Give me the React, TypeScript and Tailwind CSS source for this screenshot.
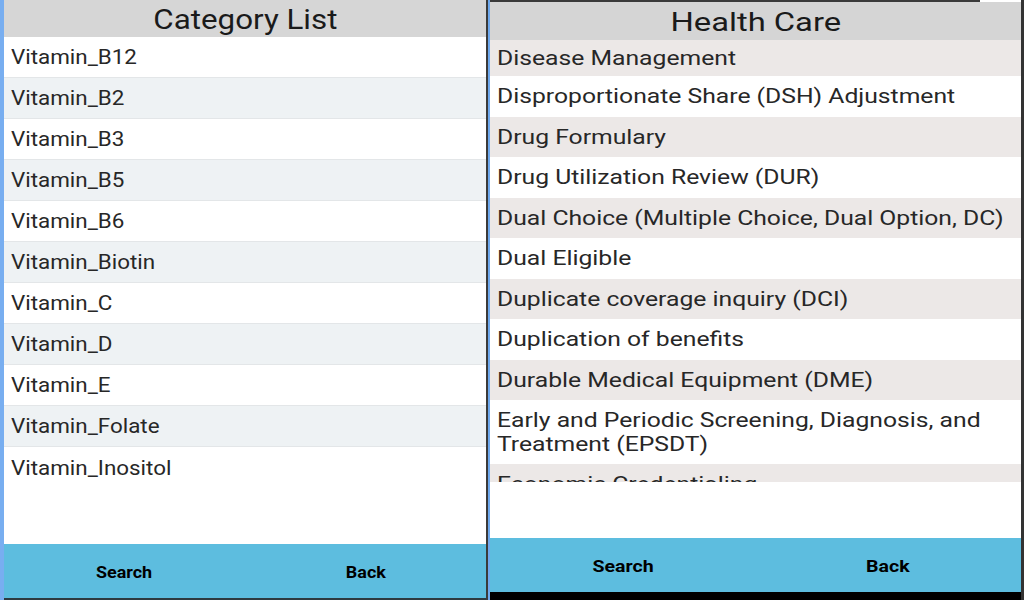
const vitamins = [
  'Vitamin_B12',
  'Vitamin_B2',
  'Vitamin_B3',
  'Vitamin_B5',
  'Vitamin_B6',
  'Vitamin_Biotin',
  'Vitamin_C',
  'Vitamin_D',
  'Vitamin_E',
  'Vitamin_Folate',
  'Vitamin_Inositol',
]

const terms = [
  'Disease Management',
  'Disproportionate Share (DSH) Adjustment',
  'Drug Formulary',
  'Drug Utilization Review (DUR)',
  'Dual Choice (Multiple Choice, Dual Option, DC)',
  'Dual Eligible',
  'Duplicate coverage inquiry (DCI)',
  'Duplication of benefits',
  'Durable Medical Equipment (DME)',
  'Early and Periodic Screening, Diagnosis, and Treatment (EPSDT)',
  'Economic Credentialing',
]

// the two phone screenshots are stretched sideways by different amounts
function Footer({ className, stretch }: { className: string; stretch: string }) {
  return (
    <div className={`flex bg-[#5dbddf] text-[16px] font-bold text-black ${className}`}>
      <button className="flex-1 flex items-center justify-center">
        <span className={`inline-block ${stretch}`}>Search</span>
      </button>
      <button className="flex-1 flex items-center justify-center">
        <span className={`inline-block ${stretch}`}>Back</span>
      </button>
    </div>
  )
}

export default function App() {
  return (
    <div className="flex w-[1024px] h-[600px] overflow-hidden bg-white font-['Roboto',sans-serif] text-[#272727]">
      <div className="w-[4px] bg-[#78aef0]" />

      {/* left screen */}
      <div className="w-[482px] flex flex-col">
        <div className="h-[37px] shrink-0 bg-[#d6d6d6] flex items-center justify-center pt-[3px] text-[27px] text-[#1a1a1a] leading-none">
          <span className="inline-block scale-x-[1.16]">Category List</span>
        </div>
        <div className="flex-1 flex flex-col overflow-hidden">
          {vitamins.map((v, i) => (
            <div
              key={v}
              className={`h-[41px] shrink-0 flex items-center pl-[7px] text-[20px] ${i < vitamins.length - 1 ? 'border-b border-[#e3e6e8]' : ''} ${i % 2 ? 'bg-[#eef2f4]' : 'bg-white'}`}
            >
              <span className="inline-block whitespace-nowrap origin-left scale-x-[1.12]">{v}</span>
            </div>
          ))}
        </div>
        <Footer className="h-[54px] shrink-0 pt-[3px]" stretch="scale-x-[1.12]" />
        <div className="h-[2px] shrink-0 bg-[#2e3a40]" />
      </div>

      <div className="w-[2px] bg-[#3a3a3a]" />
      <div className="w-[2px] bg-[#6ea8ec]" />

      {/* right screen */}
      <div className="w-[531px] flex flex-col">
        <div className="h-[2px] shrink-0 flex">
          <div className="flex-1 bg-[#3a3a3a]" />
          <div className="w-[41px] bg-white" />
        </div>
        <div className="h-[38px] shrink-0 bg-[#d5d5d5] flex items-center justify-center pt-[2px] text-[26px] text-[#1a1a1a] leading-none">
          <span className="inline-block scale-x-[1.26]">Health Care</span>
        </div>
        <div className="h-[442px] shrink-0 flex flex-col overflow-hidden">
          {terms.map((t, i) => (
            <div
              key={t}
              className={`shrink-0 flex items-center pl-[7px] py-[8px] text-[20px] leading-[24px] ${i === 0 ? 'h-[36px]' : 'min-h-[40.5px]'} ${i % 2 ? 'bg-white' : 'bg-[#ece8e7]'}`}
            >
              <span className="inline-block w-[428px] origin-left scale-x-[1.235]">{t}</span>
            </div>
          ))}
        </div>
        <div className="flex-1" />
        <Footer className="h-[54px] shrink-0 pt-[3px]" stretch="scale-x-[1.22]" />
        <div className="h-[8px] shrink-0 bg-black" />
      </div>

      <div className="w-[3px] bg-[#333]" />
    </div>
  )
}
